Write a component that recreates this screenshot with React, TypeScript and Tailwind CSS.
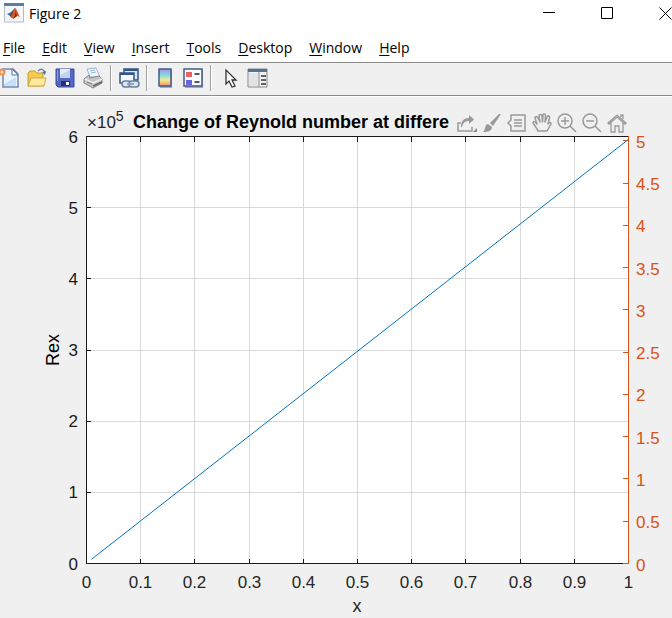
import type { ReactNode } from "react";

const menus = ["File", "Edit", "View", "Insert", "Tools", "Desktop", "Window", "Help"];

const PLOT = { left: 86, right: 628, top: 1, bottom: 428 };
const xTicks = [0, 0.1, 0.2, 0.3, 0.4, 0.5, 0.6, 0.7, 0.8, 0.9, 1];
const leftTicks = [0, 1, 2, 3, 4, 5, 6];
const rightTicks = [0, 0.5, 1, 1.5, 2, 2.5, 3, 3.5, 4, 4.5, 5];

const xAt = (v: number) => Math.round(PLOT.left + v * (PLOT.right - PLOT.left)) + 0.5;
const leftAt = (v: number) => PLOT.bottom - (v / 6) * (PLOT.bottom - PLOT.top) - 0.5;
const rightAt = (v: number) => PLOT.bottom - (v / 5.05) * (PLOT.bottom - PLOT.top) - 0.5;

function IconButton({ label, children }: { label: string; children: ReactNode }) {
  return (
    <button type="button" aria-label={label} className="size-5 shrink-0">
      <svg viewBox="0 0 20 20" className="size-5 overflow-visible" fill="none">
        {children}
      </svg>
    </button>
  );
}

function Separator() {
  return <span aria-hidden className="mr-2 ml-[6px] h-[26px] w-0.5 shrink-0 border-r border-l border-r-white border-l-[#a0a0a0]" />;
}

function TitleBar() {
  return (
    <header className="flex h-[26px] items-center overflow-hidden pl-1">
      <svg viewBox="0 0 20 20" className="size-5 shrink-0" fill="none">
        <path d="M.5.5h19v18.500H.5z" fill="#f4f6f8" stroke="#b4bcc4" />
        <path d="M0 0h20v3H0z" fill="#567f9f" />
        <path d="m3 11 4-2 4-4-3 9-2-1z" fill="#3b7fb0" />
        <path d="m6 12 5-7-2 8-2 2z" fill="#5b3550" />
        <path d="M11 5c2 1 3 6 5 9l-3-1-4 3-2-3c2-2 2-6 4-8Z" fill="#d95b1d" />
        <path d="M11 5c1 3 1 6-2 11l4-3Z" fill="#8e2613" />
      </svg>
      <h1 className="ml-[5px] text-[14px]">Figure 2</h1>
      <div className="ml-auto flex items-center gap-[45px]">
        <button type="button" aria-label="Minimize" className="size-[13px]">
          <svg viewBox="0 0 13 13" className="size-[13px]"><path d="M0 5h12v1H0z" /></svg>
        </button>
        <button type="button" aria-label="Maximize" className="size-[13px]">
          <svg viewBox="0 0 13 13" className="size-[13px]"><path d="M.5.5h11v11H.5z" fill="none" stroke="#000" /></svg>
        </button>
        <button type="button" aria-label="Close" className="size-[13px]">
          <svg viewBox="0 0 13 13" className="size-[13px]"><path d="m.5.5 12 12m0-12-12 12" stroke="#000" /></svg>
        </button>
      </div>
    </header>
  );
}

function MenuBar() {
  return (
    <nav className="flex h-9 items-center gap-[17px] pt-2 pl-[3px]">
      {menus.map((name) => (
        <button key={name} type="button" className="text-[14px] leading-5">
          <span className="underline underline-offset-2">{name[0]}</span>
          {name.slice(1)}
        </button>
      ))}
    </nav>
  );
}

function FigureToolbar() {
  return (
    <div role="toolbar" aria-label="Figure" className="flex h-[34px] items-center border-t border-b border-[#8c8c8c] bg-[#f0f0f0] pb-0.5">
      <div className="flex gap-2">
        <IconButton label="New figure">
          <path d="M3 1h10l5 5v13H3z" fill="#e9f4ff" stroke="#7488ae" strokeWidth="1.500" />
          <path d="M12 1v6h6z" fill="#fff" stroke="#5873a5" />
          <path d="M4 16 16 9v9H4z" fill="#c6def7" />
          <circle cx="2" cy="4" r="3.500" fill="#ee8a55" />
          <circle cx="2" cy="4" r="1.500" fill="#ffe3a8" />
        </IconButton>
        <IconButton label="Open">
          <path d="M0 18V5l2-2h5l2 2h6v13z" fill="#f3c94f" stroke="#c99d3a" />
          <path d="m0 18 3-8h15l-2 8z" fill="#ffeb9d" stroke="#d1a544" />
          <path d="M10 3c3-3 6-2 7 2" stroke="#6f87a6" strokeWidth="1.500" />
          <path d="m14 4 4-1-1 4z" fill="#536f99" />
        </IconButton>
        <IconButton label="Save">
          <path d="M0 1h18v18H2l-2-2z" fill="#5266c4" stroke="#3c4a98" />
          <path d="M4 1h10v9H4z" fill="#e4edfb" />
          <path d="M4 7 14 2v8H4z" fill="#c1d3ef" />
          <path d="M5 13h9v5H5z" fill="#27306b" />
          <path d="M10 14h3v3h-3z" fill="#fff" />
          <path d="M1 2h1v11H1z" fill="#8b9be5" />
        </IconButton>
        <IconButton label="Print">
          <path d="m3 1 9-1 4 9H6z" fill="#edf6ff" stroke="#a3b5ca" />
          <path d="m6 3 5-1m-4 3 5-1" stroke="#9bb8d6" />
          <path d="m0 11 5-4 1 3 9-2 3 3v4l-9 5-9-5z" fill="#c4c4c4" stroke="#858585" />
          <path d="m1 11 8 4 9-4" stroke="#eee" strokeWidth="1.500" />
          <path d="m9 18 9-4" stroke="#666" strokeWidth="1.500" />
          <path d="m3 14 5 2" stroke="#777" />
        </IconButton>
      </div>
      <Separator />
      <IconButton label="Link plot">
        <path d="M4 1h14v11H4z" fill="#d7e8fa" stroke="#345585" strokeWidth="1.500" />
        <path d="M4 1h14v2H4z" fill="#345585" />
        <path d="M0 5h14v10H0z" fill="#f5faff" stroke="#345585" strokeWidth="1.500" />
        <path d="M0 5h14v2H0z" fill="#345585" />
        <rect x="2" y="13" width="9" height="6" rx="3" fill="#dce6f1" stroke="#667f9e" strokeWidth="1.500" />
        <rect x="9" y="13" width="10" height="6" rx="3" fill="#dce6f1" stroke="#667f9e" strokeWidth="1.500" />
        <path d="M7 16h7" stroke="#91a4bb" strokeWidth="2" />
      </IconButton>
      <Separator />
      <div className="flex gap-2">
        <IconButton label="Insert colorbar">
          <defs>
            <linearGradient id="colorbar" x2="0" y2="1">
              <stop stopColor="#b18fdd" />
              <stop offset=".35" stopColor="#7dd9e5" />
              <stop offset=".65" stopColor="#f4eb8b" />
              <stop offset="1" stopColor="#f09172" />
            </linearGradient>
          </defs>
          <path d="M4 2h12v18H4z" fill="#aaa" />
          <path d="M3 1h12v17H3z" fill="url(#colorbar)" stroke="#40598c" strokeWidth="1.500" />
        </IconButton>
        <IconButton label="Insert legend">
          <path d="M1 2h18v18H1z" fill="#aaa" />
          <path d="M0 1h18v17H0z" fill="#fafcff" stroke="#40598c" strokeWidth="1.500" />
          <path d="M2 4h6v5H2z" fill="#e56562" />
          <path d="M2 12h6v5H2z" fill="#6666df" />
          <path d="M10.500 6h5m-5 8h5" stroke="#222" strokeWidth="1.500" />
        </IconButton>
      </div>
      <Separator />
      <div className="flex gap-2">
        <IconButton label="Edit plot">
          <path d="M6 2v14l3-3 3 6 3-1-3-6h4z" fill="#fff" stroke="#333" strokeWidth="1.300" />
        </IconButton>
        <IconButton label="Open property inspector">
          <path d="M0 1h19v18H0z" fill="#f2f2f2" stroke="#888" />
          <path d="M0 1h19v3H0z" fill="#4d7395" />
          <path d="M1 5h9v13H1z" fill="#e0e4e8" />
          <path d="M11 4v15" stroke="#888" />
          <path d="M13 8h5m-5 4h5m-5 4h5" stroke="#333" strokeWidth="1.500" />
        </IconButton>
      </div>
    </div>
  );
}

function AxesToolbar() {
  return (
    <div role="toolbar" aria-label="Axes" className="flex shrink-0 gap-[5px] stroke-[#999] pb-px [stroke-width:1.5]">
      <IconButton label="Export">
        <path d="M4 10H1v8h14v-4" />
        <path d="M4 14c0-6 3-9 8-9V2l5 4.500-5 4.500V8c-4 0-6 2-7 6Z" fill="#999" stroke="none" />
        <path d="M20 15v4h-4z" fill="#888" stroke="none" />
      </IconButton>
      <IconButton label="Brush data">
        <path d="M19 1 11 13l-3-3L17 1z" fill="#999" stroke="none" />
        <path d="m6 11 4 3c0 4-4 5-9 5 3-2 1-7 5-8Z" fill="#999" stroke="none" />
      </IconButton>
      <IconButton label="Data tips">
        <path d="M4 2h14v16H4v-5l-3-3 3-3zM7 7h8m-8 3h8m-8 3h8" />
      </IconButton>
      <IconButton label="Pan">
        <path d="M6 18c-1-3-3-5-5-8 0-2 2-2 4 1L3 5c0-2 2-2 3 0l2 4-1-6c0-2 2.500-2 3 0l.5 6L11 2c.5-2 2.500-1 2.500 0L13 9l2-5c1-2 3-1 2.500 1L16 11c1-2 3-2 3 0l-4 7z" strokeLinejoin="round" />
      </IconButton>
      <IconButton label="Zoom in">
        <circle cx="8" cy="8" r="7" />
        <path d="m13 13 6 6M4 8h8M8 4v8" />
      </IconButton>
      <IconButton label="Zoom out">
        <circle cx="8" cy="8" r="7" />
        <path d="m13 13 6 6M4 8h8" />
      </IconButton>
      <IconButton label="Restore view">
        <path d="m1 10 9-8 9 8-1 1-8-7-8 7zM4 10v9h4v-6h4v6h4v-9M14 4V2h2v4" strokeWidth="1.300" />
      </IconButton>
    </div>
  );
}

function Plot() {
  const { left, right, top, bottom } = PLOT;
  return (
    <svg viewBox="0 0 672 482" className="block w-full overflow-visible text-[17px]" role="img" aria-label="Rex against x">
      <rect x={left} y={top} width={right - left} height={bottom - top} fill="#fff" />
      <g stroke="#d9d9d9" shapeRendering="crispEdges">
        {xTicks.slice(1, -1).map((v) => <path key={v} d={`M${xAt(v)} ${top}V${bottom}`} />)}
        {leftTicks.slice(1, -1).map((v) => <path key={v} d={`M${left} ${leftAt(v)}H${right}`} />)}
      </g>
      <g stroke="#1a1a1a" shapeRendering="crispEdges">
        {xTicks.slice(1, -1).map((v) => (
          <path key={v} d={`M${xAt(v)} ${bottom}v-5M${xAt(v)} ${top}v5`} />
        ))}
        {leftTicks.map((v) => <path key={v} d={`M${left} ${leftAt(v)}h5`} />)}
        <path d={`M${right} ${top - 0.5}H${left + 0.5}V${bottom - 0.5}H${right}`} fill="none" />
      </g>
      <g stroke="#d95319" shapeRendering="crispEdges">
        <path d={`M${right + 0.5} ${top - 1}V${bottom}`} />
        {rightTicks.map((v) => <path key={v} d={`M${right} ${rightAt(v)}h-5`} />)}
      </g>
      <path d={`M${xAt(0.01)} ${leftAt(0.0594)}L${xAt(1)} ${leftAt(5.96)}`} stroke="#0072bd" />
      <g fill="#262626" textAnchor="middle">
        {xTicks.map((v) => <text key={v} x={xAt(v)} y={452}>{v}</text>)}
        <text x="357" y="476" className="text-[18px]">x</text>
      </g>
      <g fill="#1a1a1a" textAnchor="end">
        {leftTicks.map((v) => <text key={v} x={78} y={leftAt(v) + 6}>{v}</text>)}
      </g>
      <g fill="#d95319">
        {rightTicks.map((v) => <text key={v} x={636} y={rightAt(v) + 7}>{v}</text>)}
      </g>
      <text transform="translate(59 214) rotate(-90)" textAnchor="middle" className="text-[18px]">Rex</text>
    </svg>
  );
}

export default function App() {
  return (
    <div className="min-h-screen overflow-x-hidden bg-white font-['Open_Sans','Noto_Sans',sans-serif] text-black">
      <TitleBar />
      <MenuBar />
      <FigureToolbar />
      <main className="min-h-[522px] border-t border-white bg-[#f0f0f0] font-['Liberation_Sans',Arial,sans-serif]">
        <div className="flex h-[39px] items-end pr-[45px] pb-0.5 pl-[87px]">
          <span className="w-[46px] shrink-0 pb-px text-[17px] leading-5 text-[#262626]">
            ×10<sup className="text-[14px]">5</sup>
          </span>
          <h2 className="min-w-0 flex-1 overflow-hidden text-[18px] leading-6 font-bold whitespace-nowrap">
            Change of Reynold number at differe
          </h2>
          <AxesToolbar />
        </div>
        <Plot />
      </main>
    </div>
  );
}
